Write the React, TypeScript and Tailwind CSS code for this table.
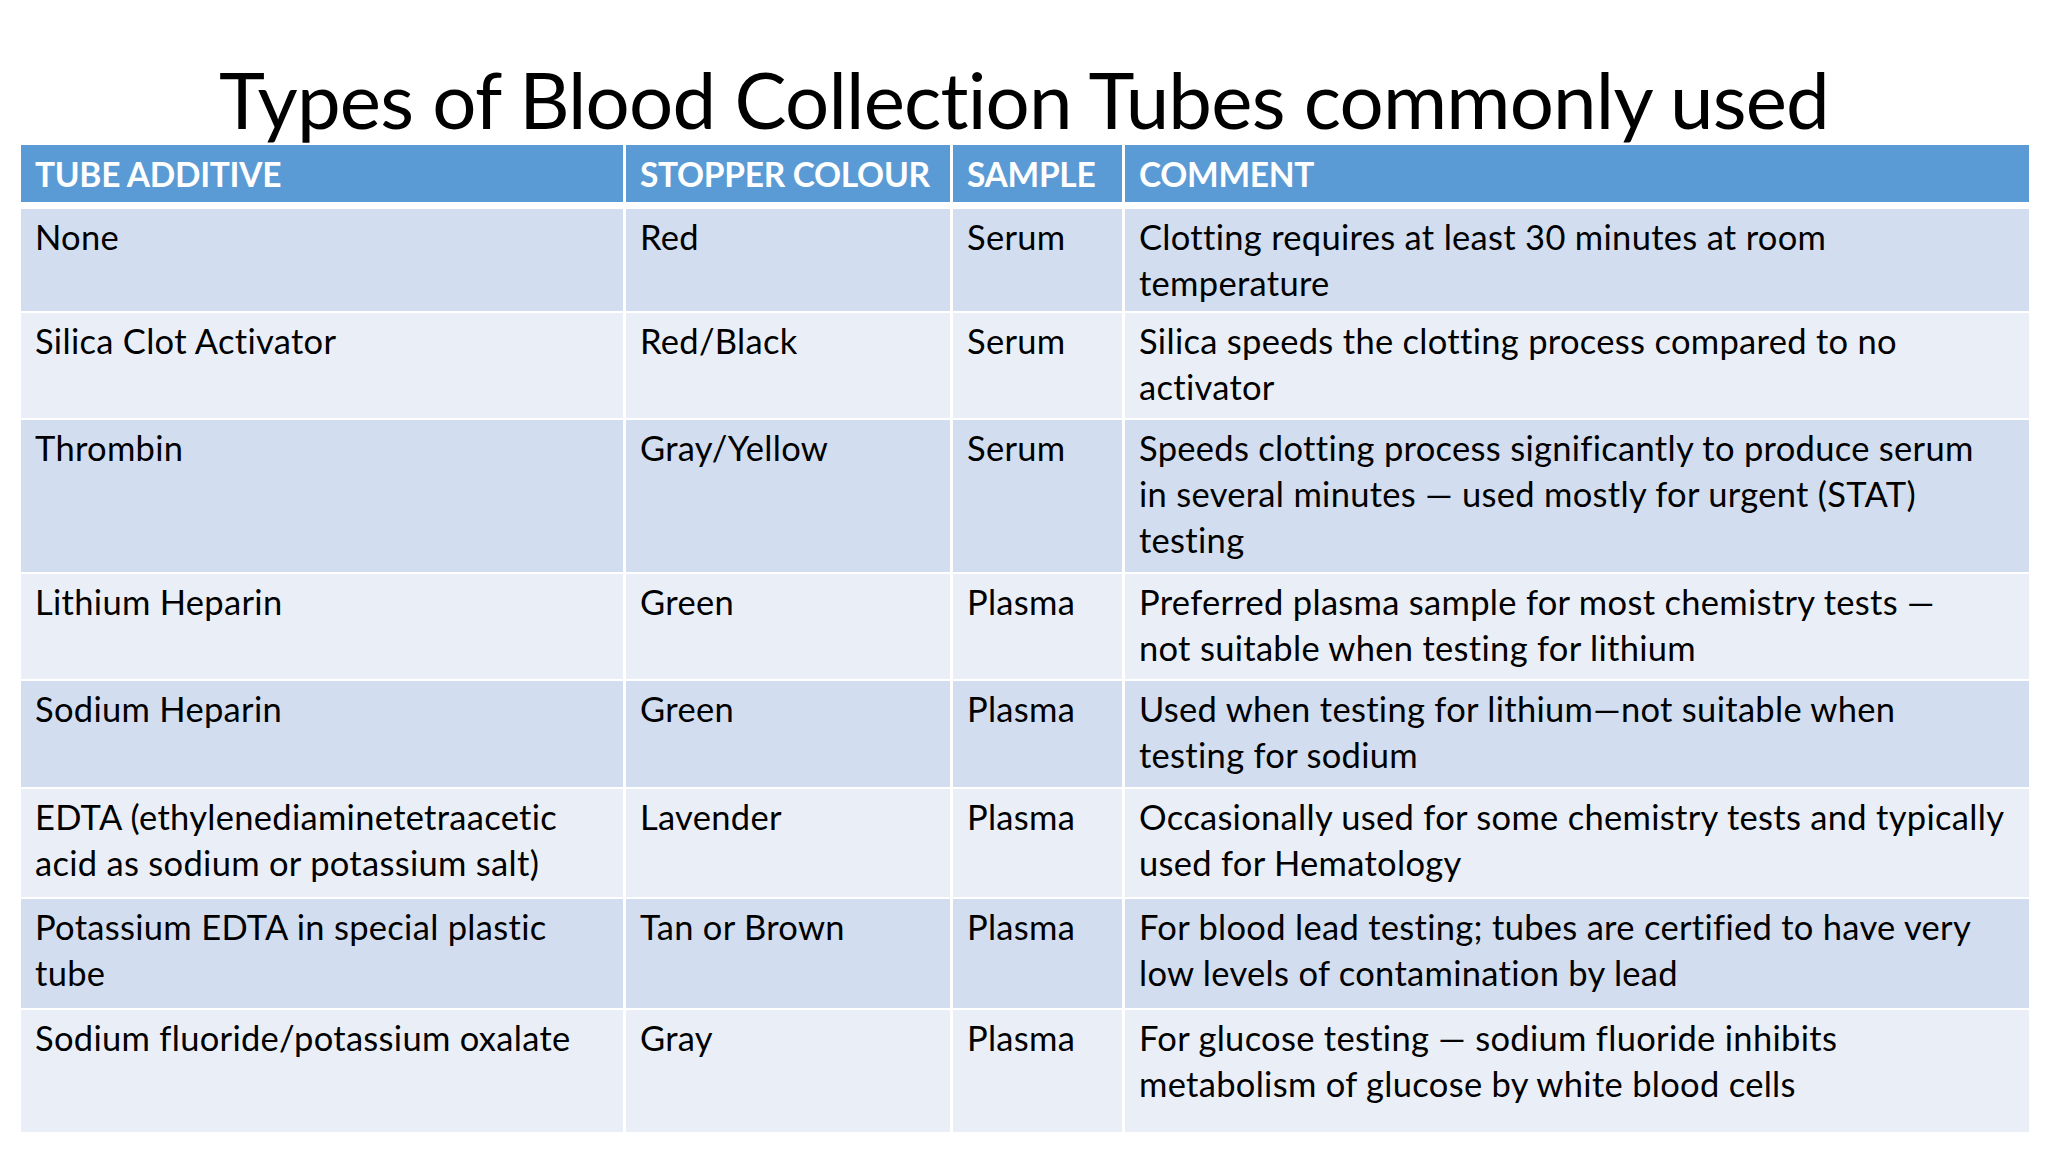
const HEADERS = ["TUBE ADDITIVE", "STOPPER COLOUR", "SAMPLE", "COMMENT"];

// lines are broken by hand so they wrap where the slide does
const ROWS = [
  { h: 102, cells: ["None", "Red", "Serum", "Clotting requires at least 30 minutes at room\ntemperature"] },
  { h: 105, cells: ["Silica Clot Activator", "Red/Black", "Serum", "Silica speeds the clotting process compared to no\nactivator"] },
  {
    h: 152,
    cells: [
      "Thrombin",
      "Gray/Yellow",
      "Serum",
      "Speeds clotting process significantly to produce serum\nin several minutes — used mostly for urgent (STAT)\ntesting",
    ],
  },
  {
    h: 105,
    cells: ["Lithium Heparin", "Green", "Plasma", "Preferred plasma sample for most chemistry tests —\nnot suitable when testing for lithium"],
  },
  { h: 106, cells: ["Sodium Heparin", "Green", "Plasma", "Used when testing for lithium—not suitable when\ntesting for sodium"] },
  {
    h: 108,
    cells: [
      "EDTA (ethylenediaminetetraacetic\nacid as sodium or potassium salt)",
      "Lavender",
      "Plasma",
      "Occasionally used for some chemistry tests and typically\nused for Hematology",
    ],
  },
  {
    h: 109,
    cells: [
      "Potassium EDTA in special plastic\ntube",
      "Tan or Brown",
      "Plasma",
      "For blood lead testing; tubes are certified to have very\nlow levels of contamination by lead",
    ],
  },
  {
    h: 122,
    cells: [
      "Sodium fluoride/potassium oxalate",
      "Gray",
      "Plasma",
      "For glucose testing — sodium fluoride inhibits\nmetabolism of glucose by white blood cells",
    ],
  },
];

export default function App() {
  return (
    <div className="h-[1152px] w-[2048px] overflow-hidden bg-white font-['Lato',sans-serif] text-black">
      <h1 className="mt-[60px] h-[79px] whitespace-nowrap text-center text-[78px] font-normal leading-none tracking-[-0.8px]">
        Types of Blood Collection Tubes commonly used
      </h1>

      <div className="mx-[21px] mt-[6px] w-[2008px]">
        <div className="grid h-[57px] grid-cols-[602px_324px_169px_1fr] gap-x-[3px]">
          {HEADERS.map((h) => (
            <div
              key={h}
              className="whitespace-nowrap bg-[#5b9bd5] pl-[14px] pr-3 pt-[6px] text-[33.5px] font-bold leading-[46px] tracking-[-0.3px] text-white"
            >
              {h}
            </div>
          ))}
        </div>

        <div className="mt-[7px] flex flex-col gap-y-[2px]">
          {ROWS.map((row, i) => (
            <div
              key={i}
              className="grid grid-cols-[602px_324px_169px_1fr] gap-x-[3px]"
              style={{ height: row.h }}
            >
              {row.cells.map((c, j) => (
                <div
                  key={j}
                  className={`whitespace-pre pl-[14px] pr-3 pt-[5px] text-[34.5px] leading-[46px] tracking-[0.3px] ${
                    i % 2 === 0 ? "bg-[#d2deef]" : "bg-[#eaeff7]"
                  }`}
                >
                  {c}
                </div>
              ))}
            </div>
          ))}
        </div>
      </div>
    </div>
  );
}
